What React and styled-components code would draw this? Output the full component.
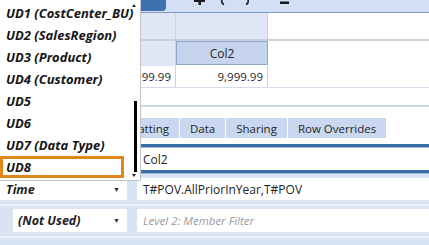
import React from 'react';
import styled, { createGlobalStyle } from 'styled-components';

const Global = createGlobalStyle`
  html, body { margin: 0; padding: 0; background: #fff; }
  body { font-family: "Open Sans", "Noto Sans", sans-serif; }
  * { box-sizing: border-box; }
`;

const Screen = styled.div`
  position: relative;
  width: 429px;
  height: 245px;
  overflow: hidden;
  background: #fff;
  display: flex;
  flex-direction: column;
  color: #1f1f1f;
  font-size: 12px;
`;

const TopBar = styled.div`
  height: 13px;
  flex-shrink: 0;
  display: flex;
  align-items: flex-start;
  background: #d3dff5;
  border-bottom: 1px solid #7e98c4;
`;

const BlueTab = styled.div`
  width: 166px;
  height: 11px;
  background: #3d72b1;
  border-bottom-right-radius: 4px;
`;

const ToolIcons = styled.svg`
  margin-left: 28px;
  display: block;
`;

const GridRow = styled.div`
  display: grid;
  grid-template-columns: 176px 92px 1fr;
  height: ${p => p.$h}px;
  flex-shrink: 0;
  border-bottom: ${p => p.$line || 'none'};
`;

const Cell = styled.div`
  background: ${p => (p.$head ? '#dfe7f7' : '#fff')};
  border-right: ${p => (p.$last ? 'none' : '1px solid #c9d2e0')};
  display: flex;
  align-items: center;
  justify-content: flex-end;
  padding-right: 4px;
  font-size: 11.5px;
`;

const ColHeader = styled.div`
  background: #c7d4ed;
  border: 1px solid #8ea4ca;
  margin: 0 0 1px 0;
  display: flex;
  align-items: center;
  justify-content: center;
  color: #2a2a2a;
`;

const Spacer = styled.div`
  height: ${p => p.$h}px;
  flex-shrink: 0;
  background: ${p => p.$bg || '#fff'};
`;

const TabStrip = styled.div`
  height: 20px;
  flex-shrink: 0;
  display: flex;
  gap: 1px;
  padding-left: 100px;
`;

const Tab = styled.div`
  background: #c9d8f0;
  padding: 0 10px;
  display: flex;
  align-items: center;
  white-space: nowrap;
  color: #252525;
  font-size: 11.5px;
`;

const BlueRule = styled.div`
  height: 4px;
  flex-shrink: 0;
  background: #3d6ea7;
  border-bottom: 1px solid #9db6da;
`;

const NameRow = styled.div`
  height: 22px;
  flex-shrink: 0;
  display: flex;
  align-items: center;
  padding-left: 143px;
  background: #fff;
`;

const Form = styled.div`
  flex: 1;
  background: #d8e3f4;
  padding-top: 4px;
  display: flex;
  flex-direction: column;
`;

const FormRow = styled.div`
  display: grid;
  grid-template-columns: 127px 1fr;
  column-gap: 10px;
  height: ${p => p.$h}px;
  flex-shrink: 0;
`;

const Divider = styled.div`
  height: 9px;
  flex-shrink: 0;
  display: flex;
  align-items: center;
  &::after {
    content: '';
    flex: 1;
    height: 2px;
    background: #eaf0fa;
  }
`;

const Combo = styled.div`
  background: #fff;
  margin-left: ${p => p.$indent || 0}px;
  display: flex;
  align-items: center;
  justify-content: space-between;
  padding: 0 7px 0 ${p => (p.$indent ? 5 : 6)}px;
  font-weight: 700;
  font-style: italic;
  font-size: 12.5px;
  color: #222;
`;

const Caret = styled.span`
  font-size: 7px;
  font-style: normal;
  color: #333;
`;

const Input = styled.div`
  background: #fff;
  display: flex;
  align-items: center;
  padding-left: 6px;
  color: ${p => (p.$placeholder ? '#9a9a9a' : '#222')};
  font-style: ${p => (p.$placeholder ? 'italic' : 'normal')};
  font-size: ${p => (p.$placeholder ? '11.5px' : '12px')};
`;

const Popup = styled.div`
  position: absolute;
  left: 0;
  top: 0;
  width: 141px;
  height: 181px;
  background: #fff;
  border-right: 1px solid #c4c4c4;
  border-bottom: 1px solid #c4c4c4;
  display: flex;
`;

const List = styled.div`
  width: 124px;
  padding-top: 2px;
  display: flex;
  flex-direction: column;
`;

const Item = styled.div`
  height: 22px;
  flex-shrink: 0;
  display: flex;
  align-items: center;
  padding-left: ${p => (p.$selected ? '3px' : '6px')};
  border: ${p => (p.$selected ? '3px solid #e0861b' : 'none')};
  font-weight: 700;
  font-style: italic;
  font-size: 13px;
  white-space: nowrap;
  color: #161616;
`;

/* scrollbar track: thumb painted as a background block */
const Scroll = styled.div`
  width: 16px;
  position: relative;
  background: linear-gradient(#000, #000) no-repeat 10px 101px / 3px 71px;
`;

const Arrow = styled.div`
  position: absolute;
  left: 8px;
  width: 0;
  height: 0;
  border-left: 2.5px solid transparent;
  border-right: 2.5px solid transparent;
  ${p => (p.$up ? 'top: 4px; border-bottom: 3px solid #222;' : 'bottom: 3px; border-top: 3px solid #222;')}
`;

const items = [
  'UD1 (CostCenter_BU)',
  'UD2 (SalesRegion)',
  'UD3 (Product)',
  'UD4 (Customer)',
  'UD5',
  'UD6',
  'UD7 (Data Type)',
  'UD8',
];

export default function App() {
  return (
    <Screen>
      <Global />
      <TopBar>
        <BlueTab />
        <ToolIcons width="100" height="6" viewBox="0 0 100 6">
          <rect x="0" y="0" width="11" height="2" fill="#1a1a1a" />
          <rect x="4.5" y="0" width="2.5" height="5" fill="#1a1a1a" />
          <path d="M28 0 Q27 3 30 4.5" stroke="#1a1a1a" strokeWidth="1.6" fill="none" />
          <path d="M54 0 Q55 3 52 4.5" stroke="#1a1a1a" strokeWidth="1.6" fill="none" />
          <rect x="86" y="1.5" width="9" height="2.5" fill="#1a1a1a" />
        </ToolIcons>
      </TopBar>

      <GridRow $h={28} $line="2px solid #c8d0dc">
        <Cell $head />
        <Cell $head />
        <Cell $last />
      </GridRow>
      <GridRow $h={25}>
        <Cell $head />
        <ColHeader>Col2</ColHeader>
        <Cell $last />
      </GridRow>
      <GridRow $h={22} $line="1px solid #d3dcea">
        <Cell>9,999.99</Cell>
        <Cell>9,999.99</Cell>
        <Cell $last />
      </GridRow>

      <Spacer $h={17} />
      <Spacer $h={2} $bg="#cbd8ee" />
      <Spacer $h={11} />

      <TabStrip>
        <Tab>Formatting</Tab>
        <Tab>Data</Tab>
        <Tab>Sharing</Tab>
        <Tab>Row Overrides</Tab>
      </TabStrip>

      <Spacer $h={6} />
      <BlueRule />
      <NameRow>Col2</NameRow>
      <BlueRule />

      <Form>
        <FormRow $h={22}>
          <Combo>
            Time <Caret>▼</Caret>
          </Combo>
          <Input>T#POV.AllPriorInYear,T#POV</Input>
        </FormRow>
        <Divider />
        <FormRow $h={23}>
          <Combo $indent={13}>
            (Not Used) <Caret>▼</Caret>
          </Combo>
          <Input $placeholder>Level 2: Member Filter</Input>
        </FormRow>
        <Divider />
      </Form>

      <Popup>
        <List>
          {items.map((it, i) => (
            <Item key={it} $selected={i === items.length - 1}>
              {it}
            </Item>
          ))}
        </List>
        <Scroll>
          <Arrow $up />
          <Arrow />
        </Scroll>
      </Popup>
    </Screen>
  );
}
